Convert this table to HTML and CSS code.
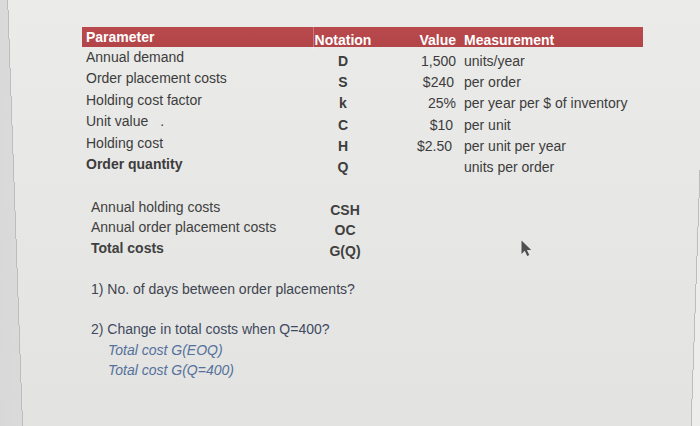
FILE: index.html
```html
<!DOCTYPE html>
<html>
<head>
<meta charset="utf-8">
<link rel="stylesheet" href="styles.css">
</head>
<body>
<div class="screen">
  <div class="sheet">
    <div class="row head">
      <div class="p">Parameter</div>
      <div class="n sep">Notation</div>
      <div class="v">Value</div>
      <div class="m">Measurement</div>
    </div>
    <div class="row">
      <div class="p">Annual demand</div>
      <div class="n">D</div>
      <div class="v">1,500</div>
      <div class="m">units/year</div>
    </div>
    <div class="row">
      <div class="p">Order placement costs</div>
      <div class="n">S</div>
      <div class="v v240">$240</div>
      <div class="m">per order</div>
    </div>
    <div class="row">
      <div class="p">Holding cost factor</div>
      <div class="n">k</div>
      <div class="v">25%</div>
      <div class="m">per year per $ of inventory</div>
    </div>
    <div class="row">
      <div class="p">Unit value <span class="dot">.</span></div>
      <div class="n">C</div>
      <div class="v v10">$10</div>
      <div class="m">per unit</div>
    </div>
    <div class="row">
      <div class="p">Holding cost</div>
      <div class="n">H</div>
      <div class="v v250">$2.50</div>
      <div class="m">per unit per year</div>
    </div>
    <div class="row">
      <div class="p bold">Order quantity</div>
      <div class="n">Q</div>
      <div class="v"></div>
      <div class="m">units per order</div>
    </div>

    <div class="lower">
      <div class="lrow">
        <div class="p">Annual holding costs</div>
        <div class="n">CSH</div>
      </div>
      <div class="lrow">
        <div class="p">Annual order placement costs</div>
        <div class="n">OC</div>
      </div>
      <div class="lrow">
        <div class="p bold">Total costs</div>
        <div class="n">G(Q)</div>
      </div>
      <div class="lrow"></div>
      <div class="lrow q1">1) No. of days between order placements?</div>
      <div class="lrow"></div>
      <div class="lrow q2">2) Change in total costs when Q=400?</div>
      <div class="lrow sub">Total cost G(EOQ)</div>
      <div class="lrow sub">Total cost G(Q=400)</div>
    </div>
  </div>
  <svg class="cursor" width="12" height="17" viewBox="0 0 12 17">
    <path d="M0.5 0.5 L0.5 14 L3.8 10.8 L6.2 16 L8.3 15 L5.9 10 L10.2 10 Z" fill="#4e4f50"/>
  </svg>
</div>
</body>
</html>
```

FILE: styles.css
```css
html, body {
  margin: 0;
  padding: 0;
}

body {
  width: 700px;
  height: 426px;
  overflow: hidden;
  font-family: "Liberation Sans", Arial, sans-serif;
  font-size: 14px;
  color: #3c3c3c;
  background:
    linear-gradient(92deg, transparent 705px, #bdbdbc 705px, #bdbdbc 706px, #ededeb 706px),
    linear-gradient(88deg, #d7d8d7 0, #d9dad9 22px, #bcbdbc 22px, #bcbdbc 23px, transparent 23px),
    linear-gradient(180deg, #ebebe9 0, #e6e6e4 60%, #e3e3e1 100%);
}

.screen {
  position: relative;
  width: 700px;
  height: 426px;
}

.sheet {
  padding: 27px 0 0 82px;
  width: 561px;
}

.row {
  display: grid;
  grid-template-columns: 231px 60px 84px 186px;
  height: 21.4px;
  line-height: 21.4px;
  white-space: nowrap;
}

.row .p {
  padding-left: 4px;
}

.row .n,
.row .v,
.row .m {
  padding-top: 3.5px;
}

.row .n {
  text-align: center;
  font-weight: bold;
}

.row .v {
  text-align: right;
  padding-right: 1px;
}

.row .v240 { padding-right: 3px; }
.row .v10 { padding-right: 4px; }
.row .v250 { padding-right: 5px; }

.row .m {
  padding-left: 7px;
}

.row.head {
  height: 20px;
  line-height: 20px;
  background: linear-gradient(180deg, #b9494c 0%, #b24548 100%);
  color: #ffffff;
  font-weight: bold;
}

.row.head .n,
.row.head .v,
.row.head .m {
  padding-top: 3px;
}

.row.head .sep {
  box-shadow: inset 1px 0 0 rgba(255, 255, 255, 0.28);
}

.bold {
  font-weight: bold;
}

.dot {
  padding-left: 8px;
}

.lower {
  margin-top: 21.7px;
  padding-left: 9px;
  color: #404040;
}

.lrow {
  display: grid;
  grid-template-columns: 224px 60px;
  height: 20.4px;
  line-height: 20.4px;
  white-space: nowrap;
}

.lrow .n {
  text-align: center;
  font-weight: bold;
  padding-top: 3px;
}

.q1 {
  display: block;
  color: #3e4450;
}

.q2 {
  display: block;
  color: #3f4a60;
}

.sub {
  display: block;
  padding-left: 17px;
  font-style: italic;
  color: #55719c;
}

.cursor {
  position: absolute;
  left: 521px;
  top: 240px;
}
```
